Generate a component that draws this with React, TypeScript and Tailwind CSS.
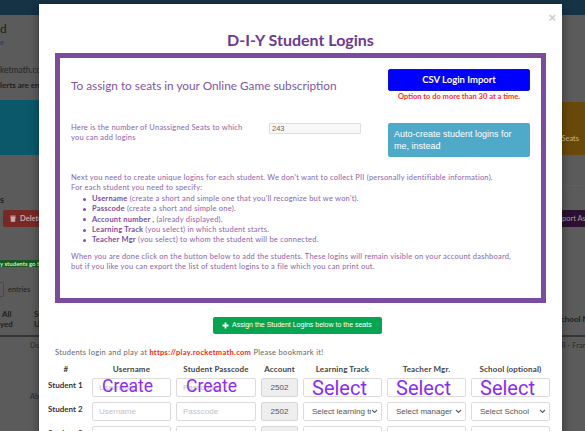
import React from "react";

function Chevron() {
  return (
    <svg width="7" height="5" viewBox="0 0 7 5" className="shrink-0">
      <path d="M1 1l2.5 2.5L6 1" stroke="#666" strokeWidth="1.2" fill="none" />
    </svg>
  );
}

function Background() {
  return (
    <div className="flex w-[585px] flex-col whitespace-nowrap font-['Lato',sans-serif]">
      <div className="h-[15px] shrink-0 bg-[#163245]" />
      <div className="flex h-[85px] shrink-0 flex-col pt-[7px] text-[#1e1e1e]">
        <div className="text-[12px] leading-[14px]">d</div>
        <div className="mt-[1px] text-[7px] leading-[10px] text-[#1c3d63]">e</div>
        <div className="mt-[18px] text-[8.5px] leading-[10px] text-[#262626]">ketmath.com</div>
        <div className="mt-[5px] text-[8px] font-bold leading-[10px]">lerts are ena</div>
      </div>
      <div className="flex h-[55px] shrink-0 justify-between">
        <div className="w-[260px] bg-[#0b586a]" />
        <div className="mt-[2px] flex w-[250px] justify-end bg-[#694909] pr-[6px] pt-[32px] text-[7.5px] leading-[10px] text-[#c4b596]">
          Seats
        </div>
      </div>
      <div className="flex h-[55px] shrink-0 justify-between">
        <div className="pt-[40px] text-[9px] font-bold leading-[10px] text-[#1e1e1e]">s</div>
        <div className="mt-[30px] h-[1px] w-[60px] bg-[#606060]" />
      </div>
      <div className="flex h-[17px] shrink-0 justify-between">
        <div className="ml-[3px] flex w-[70px] items-center rounded-[2px] bg-[#762925] pl-[7px] text-[7.5px] font-bold text-[#cfa9a9]">
          <svg width="6" height="7" viewBox="0 0 6 7" className="mr-[4px]">
            <path d="M0 1h6M2 0h2M0.8 1.8h4.4l-0.4 5H1.2z" fill="#cfa9a9" stroke="#cfa9a9" strokeWidth="0.6" />
          </svg>
          Delete
        </div>
        <div className="w-[60px] bg-[#2a1130] pl-[37px] text-[7.5px] leading-[17px] text-[#a898a8]">port Assigned</div>
      </div>
      <div className="h-[33px] shrink-0" />
      <div className="flex h-[7px] w-[120px] shrink-0 items-center bg-[#135a20] text-[6px] font-bold leading-[7px] text-[#d8e6d8]">
        y students go to the
      </div>
      <div className="h-[15px] shrink-0" />
      <div className="flex h-[15px] shrink-0 items-center">
        <div className="h-[15px] w-[4px] rounded-r-[2px] border border-l-0 border-[#474747]" />
        <div className="ml-[4px] text-[7.5px] leading-[15px] text-[#222]">entries</div>
      </div>
      <div className="h-[12px] shrink-0" />
      <div className="flex h-[20px] shrink-0 items-center justify-between text-[8px] font-bold leading-[10px] text-[#1e1e1e]">
        <div className="flex">
          <div className="w-[34px]">
            <div className="pl-[2px]">All</div>
            <div>yed</div>
          </div>
          <div>
            <div>St</div>
            <div>U</div>
          </div>
        </div>
        <div className="w-[24px]">chool Name</div>
      </div>
      <div className="h-[6px] shrink-0" />
      <div className="h-[2px] shrink-0 bg-[#353535]" />
      <div className="flex shrink-0 justify-between pt-[4px] text-[7.5px] leading-[10px] text-[#2a2a2a]">
        <div className="ml-[30px]">Do</div>
        <div className="w-[24px]">R - Franklin</div>
      </div>
      <div className="ml-[30px] mt-[41px] text-[7.5px] leading-[10px] text-[#2a2a2a]">Abe</div>
    </div>
  );
}

function Bullet({ b, rest }: { b: string; rest: string }) {
  return (
    <li className="flex items-center">
      <span className="ml-[12px] mr-[6px] inline-block h-[3px] w-[3px] shrink-0 rounded-full bg-[#7d52a0]" />
      <span>
        <b className="font-bold text-[#7a4d9e]">{b}</b>
        {rest}
      </span>
    </li>
  );
}

function TextCell({ ph, overlay }: { ph: string; overlay?: string }) {
  return (
    <div className="relative h-[19px] rounded-[2px] border border-[#dcdcdc] bg-white">
      <span className="block pl-[6px] font-['Liberation_Sans',sans-serif] text-[8px] leading-[17px] text-[#c2c2c2]">{ph}</span>
      {overlay && (
        <span className="absolute inset-y-0 left-[9px] flex -translate-y-[1.5px] items-center font-['Roboto',sans-serif] text-[17.5px] leading-none text-[#8c2bf7]">
          {overlay}
        </span>
      )}
    </div>
  );
}

function AccountCell() {
  return (
    <div className="h-[19px] rounded-[2px] border border-[#d6d6d6] bg-[#eeeeee] text-center font-['Liberation_Sans',sans-serif] text-[8px] leading-[17px] text-[#555]">
      2502
    </div>
  );
}

function SelectOverlayCell() {
  return (
    <div className="relative h-[19px] rounded-[2px] border border-[#dcdcdc] bg-white">
      <span className="absolute inset-y-0 left-[8px] flex items-center font-['Roboto',sans-serif] text-[20px] leading-none text-[#8c2bf7]">
        Select
      </span>
    </div>
  );
}

function SelectCell({ text }: { text: string }) {
  return (
    <div className="flex h-[19px] items-center rounded-[2px] border border-[#dcdcdc] bg-white pr-[3px]">
      <span className="min-w-0 flex-1 overflow-hidden whitespace-nowrap pl-[8px] font-['Liberation_Sans',sans-serif] text-[8px] leading-[17px] text-[#555]">
        {text}
      </span>
      <Chevron />
    </div>
  );
}

function Label({ n }: { n: number }) {
  return (
    <div className="pl-[3px] pt-[2px] text-[8px] font-bold leading-[10px] text-[#333]">Student {n}</div>
  );
}

function Modal() {
  return (
    <div className="absolute left-[39px] top-[4px] h-[440px] w-[523px] bg-white font-['Lato',sans-serif] shadow-[0_3px_9px_rgba(0,0,0,0.4)]">
      <div className="absolute right-[6px] top-[7px] font-['Liberation_Sans',sans-serif] text-[13px] font-bold leading-none text-[#cfcfcf]">
        ×
      </div>
      <div className="pt-[26px] text-center text-[16px] font-bold leading-[20px] text-[#6c3a93]">D-I-Y Student Logins</div>

      <div className="ml-[16px] mt-[3px] h-[250px] w-[491px] border-[5px] border-[#7b4b9e] px-[11px] pt-[11px]">
        <div className="flex">
          <div className="flex-1">
            <div className="mt-[9px] whitespace-nowrap text-[11.8px] leading-[16px] text-[#7f56a3]">
              To assign to seats in your Online Game subscription
            </div>
            <div className="mt-[29px] flex">
              <div className="w-[182px] text-[7.5px] leading-[10px] tracking-[0.22px] text-[#8a64aa]">
                Here is the number of Unassigned Seats to which you can add logins
              </div>
              <div className="ml-[16px] h-[11px] w-[92px] rounded-[1px] border border-[#dedede] bg-[#f8f8f8] pl-[2px] font-['Liberation_Sans',sans-serif] text-[7.5px] leading-[9px] text-[#666]">
                243
              </div>
            </div>
          </div>
          <div className="w-[142px]">
            <div className="flex h-[22px] items-center justify-center rounded-[2px] border border-[#1010d0] bg-[#0000ff] text-[9.5px] font-bold text-white">
              CSV Login Import
            </div>
            <div className="mt-[1px] text-center text-[7.5px] font-bold leading-[10px] text-[#ff2b2b]">
              Option to do more than 30 at a time.
            </div>
            <div className="mt-[21px] h-[34px] rounded-[2px] bg-[#4fa9c8] px-[6px] pt-[5px] font-['Liberation_Sans',sans-serif] text-[9px] leading-[12px] text-white">
              Auto-create student logins for me, instead
            </div>
          </div>
        </div>

        <div className="mt-[16px] text-[7.5px] leading-[10.4px] tracking-[0.22px] text-[#8a64aa]">
          <div className="whitespace-nowrap">
            Next you need to create unique logins for each student. We don't want to collect PII (personally identifiable information).
          </div>
          <div className="whitespace-nowrap">For each student you need to specify:</div>
          <ul className="whitespace-nowrap">
            <Bullet b="Username" rest=" (create a short and simple one that you'll recognize but we won't)." />
            <Bullet b="Passcode" rest=" (create a short and simple one)." />
            <Bullet b="Account number ," rest=" (already displayed)." />
            <Bullet b="Learning Track" rest=" (you select) in which student starts." />
            <Bullet b="Teacher Mgr" rest=" (you select) to whom the student will be connected." />
          </ul>
          <div className="mt-[6px] whitespace-nowrap">
            When you are done click on the button below to add the students. These logins will remain visible on your account dashboard,
          </div>
          <div className="whitespace-nowrap">
            but if you like you can export the list of student logins to a file which you can print out.
          </div>
        </div>
      </div>

      <div className="ml-[174px] mt-[14px] flex h-[17px] w-[169px] items-center whitespace-nowrap rounded-[2px] bg-[#06a552] pl-[9px] font-['Liberation_Sans',sans-serif] text-[7px] text-white">
        <svg width="7" height="7" viewBox="0 0 7 7" className="mr-[3px] shrink-0">
          <path d="M3.5 0.5v6M0.5 3.5h6" stroke="white" strokeWidth="1.8" />
        </svg>
        Assign the Student Logins below to the seats
      </div>

      <div className="ml-[16px] mt-[14px] whitespace-nowrap text-[7.5px] leading-[10px] tracking-[0.3px] text-[#666]">
        Students login and play at <b className="font-bold text-[#ff2020]">https://play.rocketmath.com</b> Please bookmark it!
      </div>

      <div className="ml-[6px] mt-[6px] grid grid-cols-[42px_79px_80px_37px_79px_79px_79px] gap-x-[5px] gap-y-[5px]">
        <div className="col-span-7 mb-[-1px] grid grid-cols-subgrid text-center text-[8px] font-bold leading-[10px] tracking-[0.15px] text-[#444]">
          <div>#</div>
          <div>Username</div>
          <div>Student Passcode</div>
          <div>Account</div>
          <div>Learning Track</div>
          <div>Teacher Mgr.</div>
          <div className="whitespace-nowrap">School (optional)</div>
        </div>

        <Label n={1} />
        <TextCell ph="Username" overlay="Create" />
        <TextCell ph="Passcode" overlay="Create" />
        <AccountCell />
        <SelectOverlayCell />
        <SelectOverlayCell />
        <SelectOverlayCell />

        <Label n={2} />
        <TextCell ph="Username" />
        <TextCell ph="Passcode" />
        <AccountCell />
        <SelectCell text="Select learning track" />
        <SelectCell text="Select manager" />
        <SelectCell text="Select School" />

        <Label n={3} />
        <TextCell ph="Username" />
        <TextCell ph="Passcode" />
        <AccountCell />
        <SelectCell text="Select learning track" />
        <SelectCell text="Select manager" />
        <SelectCell text="Select School" />
      </div>
    </div>
  );
}

export default function App() {
  return (
    <div className="relative h-[431px] w-[585px] overflow-hidden bg-[#5b5b5b]">
      <Background />
      <Modal />
    </div>
  );
}
